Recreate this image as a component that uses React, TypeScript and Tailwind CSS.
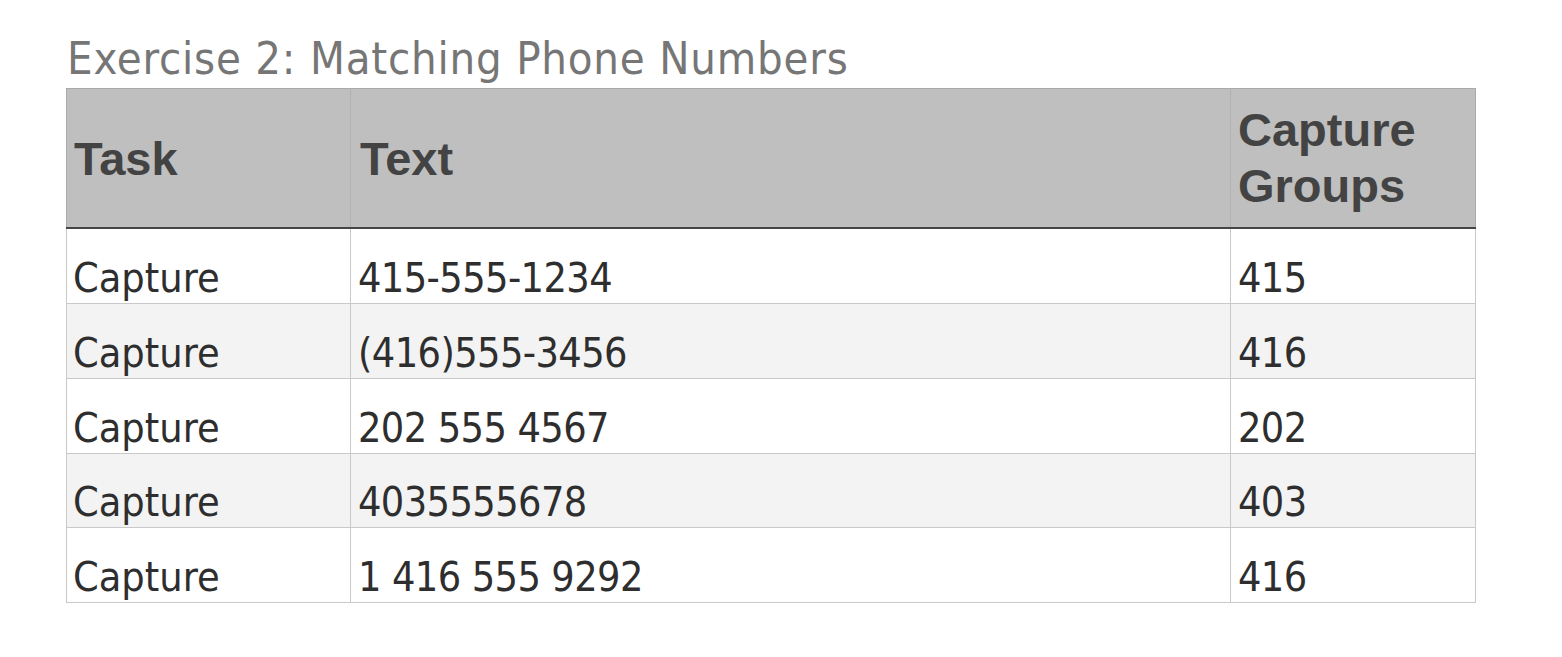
import React from "react";

const rows = [
  ["Capture", "415-555-1234", "415"],
  ["Capture", "(416)555-3456", "416"],
  ["Capture", "202 555 4567", "202"],
  ["Capture", "4035555678", "403"],
  ["Capture", "1 416 555 9292", "416"],
];

const body = { fontFamily: '"DejaVu Sans Condensed", "DejaVu Sans", sans-serif' };
const head = { fontFamily: '"Liberation Sans", Arial, sans-serif' };

export default function App() {
  return (
    <div className="min-h-[657px] w-[1562px] bg-white pl-[66px] pt-[33px]">
      <div
        className="h-[55px] pl-[1px] text-[45px] leading-[52px] tracking-[0.8px] text-[#767676]"
        style={body}
      >
        Exercise 2: Matching Phone Numbers
      </div>
      <div className="w-[1410px]">
        <div
          className="grid grid-cols-[284px_880px_246px] border-t border-t-[#a9aaa9] border-b-2 border-b-[#454545] bg-[#bebfbe] text-[47px] font-bold leading-[56px] text-[#434343]"
          style={head}
        >
          <div className="flex h-[138px] items-center border-l border-l-[#a9aaa9] pl-[7px] pt-[2px]">Task</div>
          <div className="flex h-[138px] items-center border-l border-l-[#b0b1b0] pl-[9px] pt-[2px]">Text</div>
          <div className="flex h-[138px] items-center border-l border-r border-l-[#b0b1b0] border-r-[#a9aaa9] pl-[7px]">
            <span>
              Capture
              <br />
              Groups
            </span>
          </div>
        </div>
        {rows.map((r, i) => (
          <div
            key={i}
            className={`grid grid-cols-[284px_880px_246px] border-b border-b-[#c9c9c9] text-[41px] leading-[41px] text-[#2e2e2e] ${
              i % 2 === 1 ? "bg-[#f3f3f3]" : "bg-white"
            } ${i === 3 ? "h-[74px]" : "h-[75px]"}`}
            style={body}
          >
            <div className="flex items-end border-l border-l-[#c9c9c9] pb-[4px] pl-[6px]">{r[0]}</div>
            <div className="flex items-end border-l border-l-[#c9c9c9] pb-[4px] pl-[7px] tracking-[-0.6px]">{r[1]}</div>
            <div className="flex items-end border-l border-r border-l-[#c9c9c9] border-r-[#c9c9c9] pb-[4px] pl-[7px] tracking-[-0.6px]">
              {r[2]}
            </div>
          </div>
        ))}
      </div>
    </div>
  );
}
